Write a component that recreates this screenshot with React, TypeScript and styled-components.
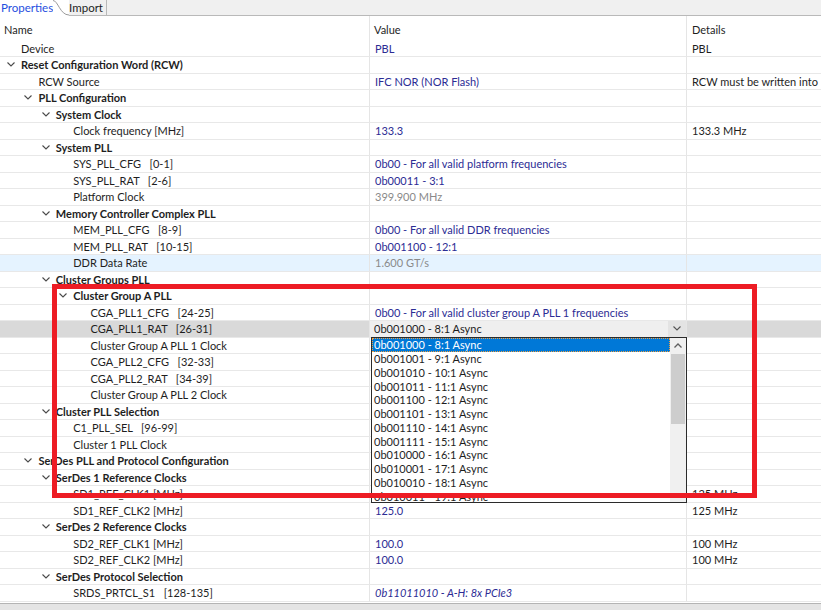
import React from 'react'
import styled, { createGlobalStyle } from 'styled-components'

const GlobalStyle = createGlobalStyle`
	html, body {
		margin: 0;
		padding: 0;
		background: #ffffff;
	}
	body {
		font-family: Lato, 'Noto Sans', sans-serif;
		font-size: 11px;
		color: #1e1e1e;
	}
`

const ROW_H = 16.5
const INDENT = 17.4

const Window = styled.div`
	position: relative;
	width: 821px;
	height: 610px;
	overflow: hidden;
	display: flex;
	flex-direction: column;
	background: #ffffff;
`

const TabStrip = styled.div`
	height: 16px;
	flex: none;
	display: flex;
	align-items: stretch;
	background: #f0f0f0;
	border-bottom: 1px solid #b9b9b9;
	box-sizing: border-box;
	font-size: 11.5px;
`

const ActiveTab = styled.div`
	display: flex;
	align-items: stretch;
	background: #ffffff;
	margin-bottom: -1px;
`

const ActiveTabLabel = styled.span`
	padding: 0 0 0 1px;
	line-height: 15px;
	color: #1f4fe0;
`

const Tab = styled.div`
	display: flex;
	align-items: center;
	padding: 0 3px 0 0;
	line-height: 15px;
	color: #1e1e1e;
	border-right: 1px solid #b9b9b9;
`

const Table = styled.div`
	flex: 1;
	display: grid;
	grid-template-columns: 370px 317px 1fr;
	grid-auto-rows: ${ROW_H}px;
	grid-template-rows: 24.5px;
	align-content: start;
`

const HeaderCell = styled.div<{ $last?: boolean }>`
	display: flex;
	align-items: center;
	padding-left: ${(p) => (p.$last ? 5 : 4)}px;
	padding-top: 3px;
	border-right: ${(p) => (p.$last ? 'none' : '1px solid #e5e5e5')};
	color: #1e1e1e;
	white-space: nowrap;
`

const Cell = styled.div<{ $bg: string; $last?: boolean }>`
	display: flex;
	align-items: center;
	background: ${(p) => p.$bg};
	border-bottom: 1px solid #e8e8e8;
	border-right: ${(p) => (p.$last ? 'none' : '1px solid #e5e5e5')};
	box-sizing: border-box;
	white-space: pre;
	overflow: hidden;
	min-width: 0;
`

const NameCell = styled(Cell)<{ $level: number }>`
	padding-left: ${(p) => 20 + p.$level * INDENT - 14}px;
`

const Expander = styled.span`
	width: 14px;
	flex: none;
	display: flex;
	align-items: center;
	justify-content: flex-start;
	padding-left: 1px;
`

const NameText = styled.span<{ $bold: boolean }>`
	font-weight: ${(p) => (p.$bold ? 700 : 400)};
	color: #1e1e1e;
`

const ValueText = styled.span<{ $tone: 'value' | 'grey' | 'italic' }>`
	padding-left: 5px;
	color: ${(p) => (p.$tone === 'grey' ? '#8a8a8a' : '#2c2c94')};
	font-style: ${(p) => (p.$tone === 'italic' ? 'italic' : 'normal')};
`

const DetailText = styled.span`
	padding-left: 5px;
	color: #1e1e1e;
`

const Combo = styled.div`
	flex: 1;
	align-self: stretch;
	display: flex;
	align-items: center;
	background: #efefef;
	color: #1e1e1e;
	padding-left: 4px;
`

const ComboText = styled.span`
	flex: 1;
`

const ComboArrow = styled.span`
	width: 18px;
	align-self: stretch;
	display: flex;
	align-items: center;
	justify-content: center;
	background: #e3e3e3;
`

const BottomBar = styled.div`
	height: 7px;
	flex: none;
	background: #e4e4e4;
	border-top: 1px solid #b4b4b4;
	box-sizing: border-box;
`

const DropList = styled.div`
	position: absolute;
	left: 371px;
	top: 337px;
	width: 316px;
	height: 166px;
	box-sizing: border-box;
	border: 1px solid #2b2b2b;
	background: #ffffff;
	display: flex;
	overflow: hidden;
`

const DropItems = styled.div`
	flex: 1;
	display: flex;
	flex-direction: column;
	min-width: 0;
`

const DropItem = styled.div<{ $selected?: boolean }>`
	height: 13.75px;
	flex: none;
	display: flex;
	align-items: center;
	padding-left: 2px;
	box-sizing: border-box;
	white-space: nowrap;
	color: ${(p) => (p.$selected ? '#ffffff' : '#1e1e1e')};
	background: ${(p) => (p.$selected ? '#0078d7' : 'transparent')};
	outline: ${(p) => (p.$selected ? '1px dotted #f0a040' : 'none')};
	outline-offset: -1px;
`

const ScrollBar = styled.div`
	width: 16px;
	flex: none;
	background: #f0f0f0;
	display: flex;
	flex-direction: column;
`

const ScrollButton = styled.div`
	height: 15px;
	flex: none;
	display: flex;
	align-items: center;
	justify-content: center;
`

const ScrollThumb = styled.div`
	height: 70px;
	margin: 1px 1px 0 1px;
	background: #cdcdcd;
`

const Annotation = styled.div`
	position: absolute;
	left: 52px;
	top: 284px;
	width: 705px;
	height: 214px;
	box-sizing: border-box;
	border: 5px solid #ed1c24;
	pointer-events: none;
`

const ChevronDown = ({ color = '#4a4a4a' }: { color?: string }) => (
	<svg width="8" height="5" viewBox="0 0 8 5">
		<polyline points="0.5,0.5 4,4 7.5,0.5" fill="none" stroke={color} strokeWidth="1.1" />
	</svg>
)

const ChevronUp = () => (
	<svg width="8" height="5" viewBox="0 0 8 5">
		<polyline points="0.5,4.5 4,1 7.5,4.5" fill="none" stroke="#606060" strokeWidth="1.3" />
	</svg>
)

type Row = {
	name: string
	level: number
	group?: boolean
	value?: string
	tone?: 'value' | 'grey' | 'italic'
	detail?: string
	bg?: string
	combo?: boolean
}

const rows: Row[] = [
	{ name: 'Device', level: 0, value: 'PBL', detail: 'PBL' },
	{ name: 'Reset Configuration Word (RCW)', level: 0, group: true },
	{ name: 'RCW Source', level: 1, value: 'IFC NOR (NOR Flash)', detail: 'RCW must be written into' },
	{ name: 'PLL Configuration', level: 1, group: true },
	{ name: 'System Clock', level: 2, group: true },
	{ name: 'Clock frequency [MHz]', level: 3, value: '133.3', detail: '133.3 MHz' },
	{ name: 'System PLL', level: 2, group: true },
	{ name: 'SYS_PLL_CFG   [0-1]', level: 3, value: '0b00 - For all valid platform frequencies' },
	{ name: 'SYS_PLL_RAT   [2-6]', level: 3, value: '0b00011 - 3:1' },
	{ name: 'Platform Clock', level: 3, value: '399.900 MHz', tone: 'grey' },
	{ name: 'Memory Controller Complex PLL', level: 2, group: true },
	{ name: 'MEM_PLL_CFG   [8-9]', level: 3, value: '0b00 - For all valid DDR frequencies' },
	{ name: 'MEM_PLL_RAT   [10-15]', level: 3, value: '0b001100 - 12:1' },
	{ name: 'DDR Data Rate', level: 3, value: '1.600 GT/s', tone: 'grey', bg: '#e5f3ff' },
	{ name: 'Cluster Groups PLL', level: 2, group: true },
	{ name: 'Cluster Group A PLL', level: 3, group: true },
	{ name: 'CGA_PLL1_CFG   [24-25]', level: 4, value: '0b00 - For all valid cluster group A PLL 1 frequencies' },
	{ name: 'CGA_PLL1_RAT   [26-31]', level: 4, combo: true, bg: '#d9d9d9' },
	{ name: 'Cluster Group A PLL 1 Clock', level: 4 },
	{ name: 'CGA_PLL2_CFG   [32-33]', level: 4 },
	{ name: 'CGA_PLL2_RAT   [34-39]', level: 4 },
	{ name: 'Cluster Group A PLL 2 Clock', level: 4 },
	{ name: 'Cluster PLL Selection', level: 2, group: true },
	{ name: 'C1_PLL_SEL   [96-99]', level: 3 },
	{ name: 'Cluster 1 PLL Clock', level: 3 },
	{ name: 'SerDes PLL and Protocol Configuration', level: 1, group: true },
	{ name: 'SerDes 1 Reference Clocks', level: 2, group: true },
	{ name: 'SD1_REF_CLK1 [MHz]', level: 3, detail: '125 MHz' },
	{ name: 'SD1_REF_CLK2 [MHz]', level: 3, value: '125.0', detail: '125 MHz' },
	{ name: 'SerDes 2 Reference Clocks', level: 2, group: true },
	{ name: 'SD2_REF_CLK1 [MHz]', level: 3, value: '100.0', detail: '100 MHz' },
	{ name: 'SD2_REF_CLK2 [MHz]', level: 3, value: '100.0', detail: '100 MHz' },
	{ name: 'SerDes Protocol Selection', level: 2, group: true },
	{ name: 'SRDS_PRTCL_S1   [128-135]', level: 3, value: '0b11011010 - A-H: 8x PCIe3', tone: 'italic' },
]

const ratios = [
	'0b001000 - 8:1 Async',
	'0b001001 - 9:1 Async',
	'0b001010 - 10:1 Async',
	'0b001011 - 11:1 Async',
	'0b001100 - 12:1 Async',
	'0b001101 - 13:1 Async',
	'0b001110 - 14:1 Async',
	'0b001111 - 15:1 Async',
	'0b010000 - 16:1 Async',
	'0b010001 - 17:1 Async',
	'0b010010 - 18:1 Async',
	'0b010011 - 19:1 Async',
]

const PropertyRow = ({ row }: { row: Row }) => {
	const bg = row.bg ?? '#ffffff'
	return (
		<>
			<NameCell $bg={bg} $level={row.level}>
				<Expander>{row.group && <ChevronDown />}</Expander>
				<NameText $bold={!!row.group}>{row.name}</NameText>
			</NameCell>
			<Cell $bg={bg}>
				{row.combo ? (
					<Combo>
						<ComboText>0b001000 - 8:1 Async</ComboText>
						<ComboArrow>
							<ChevronDown color="#555555" />
						</ComboArrow>
					</Combo>
				) : (
					row.value && <ValueText $tone={row.tone ?? 'value'}>{row.value}</ValueText>
				)}
			</Cell>
			<Cell $bg={bg} $last>
				{row.detail && <DetailText>{row.detail}</DetailText>}
			</Cell>
		</>
	)
}

export default function App() {
	return (
		<>
			<GlobalStyle />
			<Window>
				<TabStrip>
					<ActiveTab>
						<ActiveTabLabel>Properties</ActiveTabLabel>
						<svg width="16" height="16" viewBox="0 0 16 16">
							<path d="M0 0 C5 0 7 15 16 15 L16 16 L0 16 Z" fill="#ffffff" />
							<path d="M0 0.5 C5 0.5 7 15 16 15" fill="none" stroke="#9a9a9a" strokeWidth="1" />
						</svg>
					</ActiveTab>
					<Tab>Import</Tab>
				</TabStrip>
				<Table>
					<HeaderCell>Name</HeaderCell>
					<HeaderCell>Value</HeaderCell>
					<HeaderCell $last>Details</HeaderCell>
					{rows.map((row) => (
						<PropertyRow key={row.name} row={row} />
					))}
				</Table>
				<BottomBar />
				<DropList>
					<DropItems>
						{ratios.map((r, i) => (
							<DropItem key={r} $selected={i === 0}>
								{r}
							</DropItem>
						))}
					</DropItems>
					<ScrollBar>
						<ScrollButton>
							<ChevronUp />
						</ScrollButton>
						<ScrollThumb />
					</ScrollBar>
				</DropList>
				<Annotation />
			</Window>
		</>
	)
}
